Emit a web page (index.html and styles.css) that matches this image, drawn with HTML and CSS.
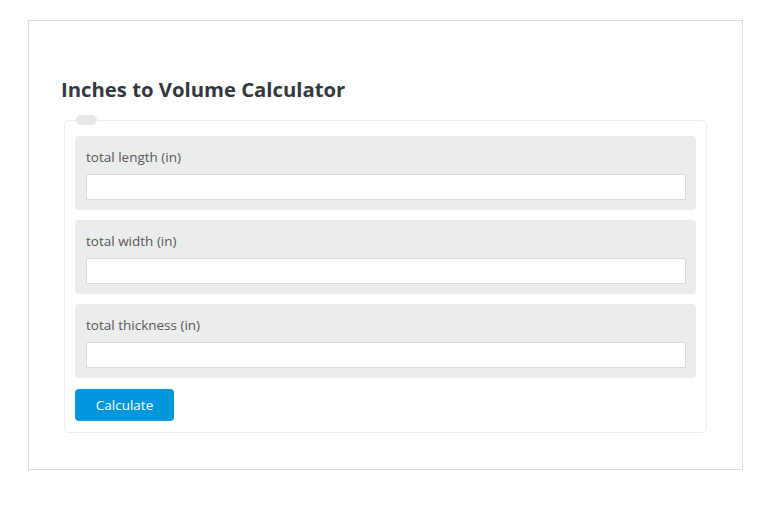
FILE: index.html
```html
<!DOCTYPE html>
<html lang="en">
<head>
  <meta charset="UTF-8">
  <title>Inches to Volume Calculator</title>
  <meta name="viewport" content="width=device-width, initial-scale=1">
  <link rel="stylesheet" href="styles.css">
</head>
<body>
  <div class="page">
    <h2 class="calc-title">Inches to Volume Calculator</h2>
    <form class="calc-form" onsubmit="return false">
      <fieldset class="calc-box">
        <legend class="calc-legend"></legend>
        <div class="field">
          <label for="length">total length (in)</label>
          <input type="text" id="length">
        </div>
        <div class="field">
          <label for="width">total width (in)</label>
          <input type="text" id="width">
        </div>
        <div class="field">
          <label for="thickness">total thickness (in)</label>
          <input type="text" id="thickness">
        </div>
        <button type="button" class="calc-btn">Calculate</button>
      </fieldset>
    </form>
  </div>
</body>
</html>
```

FILE: styles.css
```css
body {
  margin: 0;
  background: #fff;
  font-family: "Open Sans", "Noto Sans", sans-serif;
  color: #555;
}

/*===============================
Page box
=============*/

.page {
  width: 715px;
  margin: 20px 0 0 28px;
  padding: 54px 35px 36px;
  box-sizing: border-box;
  border: 1px solid #dcdcdc;
}

.calc-title {
  margin: 0 0 12px -3px;
  font-size: 20.3px;
  line-height: 28px;
  font-weight: 700;
  color: #33383e;
}

.calc-form {
  margin: 0;
}

.calc-box {
  margin: 0;
  padding: 11px 10px 11px;
  border: 1px solid #ededed;
  border-radius: 5px;
}

.calc-legend {
  width: 21px;
  height: 10px;
  padding: 0;
  margin-left: 1px;
  background: #e6e7e7;
  border-radius: 5px;
}

/*===============================
Fields
=============*/

.field {
  background: #ebecec;
  border-radius: 4px;
  padding: 11px 10px 10px 11px;
  margin-bottom: 10px;
}

.field:nth-of-type(3) {
  margin-bottom: 11px;
}

.field label {
  display: block;
  font-size: 13.5px;
  line-height: 20px;
  margin-bottom: 7px;
  color: #575757;
}

.field input {
  display: block;
  width: 100%;
  height: 26px;
  box-sizing: border-box;
  border: 1px solid #d9d9d9;
  background: #fff;
  outline: none;
}

.calc-btn {
  display: block;
  width: 99px;
  height: 32px;
  border: none;
  border-radius: 4px;
  background: #0096dc;
  color: #fff;
  font-family: "Open Sans", "Noto Sans", sans-serif;
  font-size: 13.5px;
  cursor: pointer;
}
```
